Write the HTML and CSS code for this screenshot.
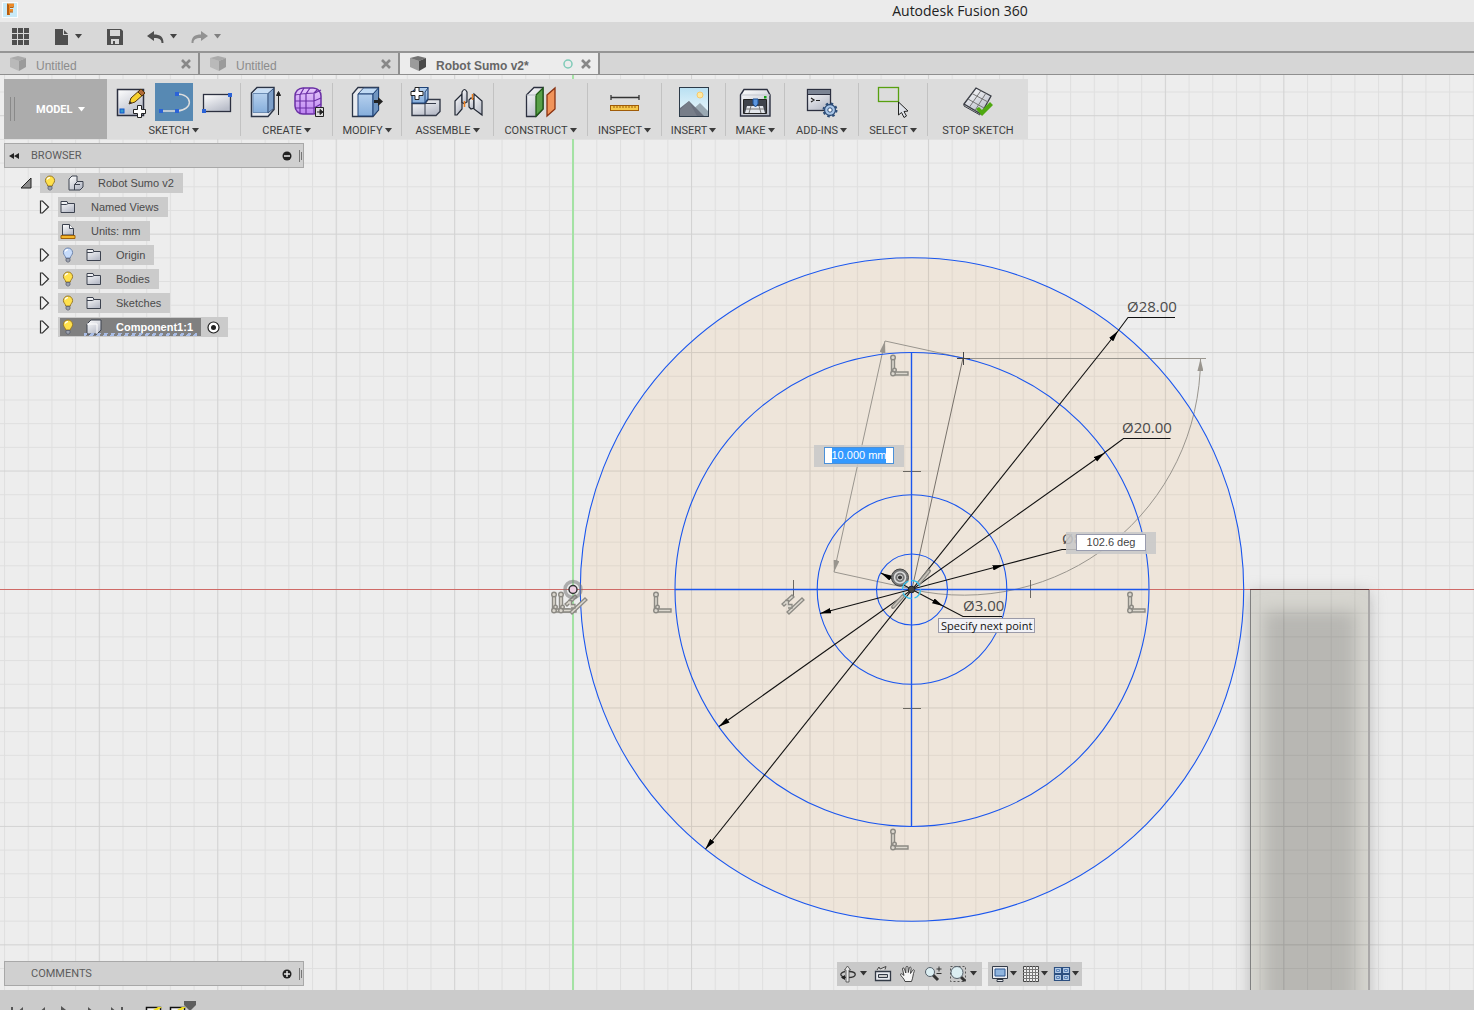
FILE: index.html
```html
<!DOCTYPE html>
<html lang="en">
<head>
<meta charset="utf-8">
<title>Autodesk Fusion 360</title>
<link rel="stylesheet" href="styles.css">
</head>
<body>
<svg class="defs" aria-hidden="true">
  <defs>
    <linearGradient id="g-steel" x1="0" y1="0" x2="0.6" y2="1"><stop offset="0" stop-color="#fff"/><stop offset="1" stop-color="#b9bdc9"/></linearGradient>
    <linearGradient id="g-blue" x1="0" y1="0" x2="0" y2="1"><stop offset="0" stop-color="#b5d0ee"/><stop offset="1" stop-color="#86aedb"/></linearGradient>
    <linearGradient id="g-sky" x1="0" y1="0" x2="0" y2="1"><stop offset="0" stop-color="#b9e0f2"/><stop offset="1" stop-color="#eef9fd"/></linearGradient>
    <linearGradient id="g-purple" x1="0" y1="0" x2="0" y2="1"><stop offset="0" stop-color="#e6c8fb"/><stop offset="1" stop-color="#bd84f2"/></linearGradient>
    <symbol id="i-cube" viewBox="0 0 18 18"><path d="M1 3 9 1l8 2-7 3z" fill="currentColor" opacity=".75"/><path d="M1 3l9 3v10l-9-4z" fill="currentColor" opacity=".5"/><path d="M10 6l7-3v9l-7 4z" fill="currentColor"/></symbol>
    <symbol id="i-close" viewBox="0 0 10 10"><path d="M1 1l8 8M9 1L1 9" stroke="currentColor" stroke-width="2.600"/></symbol>
    <symbol id="i-caret" viewBox="0 0 7 5"><path d="M0 0h7L3.500 4.500z" fill="currentColor"/></symbol>
    <symbol id="i-bulb" viewBox="0 0 12 16"><path d="M6 1a4.600 4.600 0 0 0-4.600 4.600C1.400 8 3.500 8.600 3.700 11h4.600c.2-2.400 2.300-3 2.300-5.400A4.600 4.600 0 0 0 6 1z" fill="var(--bulb)" stroke="var(--rim)"/><path d="M3 4.500Q4 2.500 6 2.600" stroke="#fff" stroke-width="1.300" fill="none"/><path d="M4 11.500h4v2.500L6.500 15h-1L4 14z" fill="#9aa0ad" stroke="#51586a" stroke-width=".7"/></symbol>
    <symbol id="i-folder" viewBox="0 0 16 14"><path d="M1 12.500v-11h6l1 2h6.500v9z" fill="url(#g-steel)" stroke="#3c424f"/><path d="M1 4.500h5.500l1.500-1" fill="none" stroke="#3c424f"/></symbol>
    <symbol id="i-arrow" viewBox="0 0 11 14"><path d="M1.500 1v12h2l6-6-6-6z" fill="#f2f2f2" stroke="#333" stroke-width="1.200"/></symbol>
    <symbol id="i-perp" viewBox="0 0 22 24"><g fill="#dcd8cf" stroke="#8c8a84" stroke-width="1.400"><path d="M3.500 4h3v13h-3zM5 18h15v3H5z"/><circle cx="5" cy="3.500" r="2.300"/><circle cx="5" cy="19.500" r="2.300"/><circle cx="6.500" cy="16" r="1.800"/></g></symbol>
    <symbol id="i-para" viewBox="0 0 26 22"><g fill="#dcd8cf" stroke="#8c8a84" stroke-width="1.300"><path d="M2 10 12 1l2 2L4 12zM7 18 22 4l2 2L9 20z"/><path d="M5 6.500h3.500v4H12V14H8"/></g></symbol>
    <marker id="m-black" viewBox="0 0 12 6" refX="12" refY="3" markerWidth="11" markerHeight="6" markerUnits="userSpaceOnUse" orient="auto-start-reverse"><path d="M0 0l12 3L0 6z" fill="#000"/></marker>
    <marker id="m-gray" viewBox="0 0 12 6" refX="12" refY="3" markerWidth="12" markerHeight="6" markerUnits="userSpaceOnUse" orient="auto-start-reverse"><path d="M0 0l12 3L0 6z" fill="#99958e"/></marker>
    <pattern id="p-minor" x="572.600" y="589" width="23.690" height="23.690" patternUnits="userSpaceOnUse"><path d="M0 .5H24M.5 0V24" stroke="#000" stroke-opacity=".06"/></pattern>
    <pattern id="p-major" x="572.600" y="589" width="118.450" height="118.450" patternUnits="userSpaceOnUse"><path d="M0 .5H119M.5 0V119" stroke="#000" stroke-opacity=".06"/></pattern>
    <filter id="f-blur" x="-50%" y="-20%" width="200%" height="140%"><feGaussianBlur stdDeviation="8"/></filter>
  </defs>
</svg>

<header class="titlebar">
  <svg class="logo" width="16" height="16" viewBox="0 0 16 16"><rect width="16" height="16" fill="#f8fcfe"/><rect x="1" y="1" width="14" height="14" fill="#c8eaf8"/><path d="M5 1.500h7v2.500l-1 .7H8V7h3v2.500L8 10v3H5z" fill="#f08a24"/><path d="M5 1.500l2 1.500v8.500l1 1.500H5zM8 4.700h3l1-.7v1l-1 1H8zM8 9.500h3v1H8z" fill="#b55d10"/></svg>
  <h1 class="title">Autodesk Fusion 360</h1>
</header>

<nav class="quickbar" aria-label="Quick access">
  <button class="qbtn" aria-label="Data panel"><svg width="17" height="17" viewBox="0 0 17 17" fill="#4f4f4f"><path d="M0 0h5v5H0zM6 0h5v5H6zM12 0h5v5h-5zM0 6h5v5H0zM6 6h5v5H6zM12 6h5v5h-5zM0 12h5v5H0zM6 12h5v5H6zM12 12h5v5h-5z"/></svg></button>
  <button class="qbtn q-file" aria-label="File"><svg width="14" height="16" viewBox="0 0 14 16" fill="#4f4f4f"><path d="M0 0h8v6h5v10H0zM9 1l4 4H9z"/></svg><svg class="caret" width="7" height="5"><use href="#i-caret"/></svg></button>
  <button class="qbtn q-save" aria-label="Save"><svg width="16" height="16" viewBox="0 0 16 16"><path d="M0 0h14l2 2v14H0z" fill="#4f4f4f"/><path d="M3 1h10v6H3zM4 10h8v5H4z" fill="#d8d8d8"/><path d="M6 12h2v3H6z" fill="#4f4f4f"/></svg></button>
  <button class="qbtn q-undo" aria-label="Undo"><svg width="17" height="12" viewBox="0 0 17 12"><path d="M0 5l7-5v3.500c6 0 9.500 2 9.500 8.500h-2c0-3.500-2-5-7.500-5v3z" fill="#4f4f4f"/></svg><svg class="caret" width="7" height="5"><use href="#i-caret"/></svg></button>
  <button class="qbtn q-redo" aria-label="Redo"><svg width="17" height="12" viewBox="0 0 17 12"><path d="M17 5l-7-5v3.500C4 3.500.5 5.500.5 12h2c0-3.500 2-5 7.500-5v3z" fill="#929292"/></svg><svg class="caret" width="7" height="5"><use href="#i-caret"/></svg></button>
</nav>

<div class="tabs">
  <div class="tab"><svg class="cube" width="18" height="18"><use href="#i-cube"/></svg><span class="tab-name">Untitled</span><button class="close" aria-label="Close"><svg width="10" height="10"><use href="#i-close"/></svg></button></div>
  <div class="tab"><svg class="cube" width="18" height="18"><use href="#i-cube"/></svg><span class="tab-name">Untitled</span><button class="close" aria-label="Close"><svg width="10" height="10"><use href="#i-close"/></svg></button></div>
  <div class="tab active"><svg class="cube" width="18" height="18"><use href="#i-cube"/></svg><span class="tab-name">Robot Sumo v2*</span><svg class="sync" width="10" height="10"><circle cx="5" cy="5" r="4" fill="none" stroke="#7fcbb8" stroke-width="1.500"/></svg><button class="close" aria-label="Close"><svg width="10" height="10"><use href="#i-close"/></svg></button></div>
</div>

<main class="workspace">
  <svg class="sketch" aria-label="Sketch canvas">
    <g transform="translate(0 -75)">
      <rect x="1249" y="592" width="121" height="480" fill="#8f8f8f" opacity=".5" filter="url(#f-blur)"/>
      <circle cx="912" cy="589.500" r="331.700" fill="#eee5da"/>
      <rect x="1250.500" y="589.500" width="118" height="500" fill="#d6d5cf"/>
      <rect x="1264" y="611" width="92" height="500" fill="#b8b7b3" filter="url(#f-blur)"/>
      <rect x="0" y="75" width="100%" height="100%" fill="url(#p-minor)"/>
      <rect x="0" y="75" width="100%" height="100%" fill="url(#p-major)"/>
      <path d="M573 75V2000" stroke="#a4e2a4" stroke-width="2"/>
      <path d="M0 589.500H5000" stroke="#cf6a66"/>
      <path d="M1250 589.500h119" stroke="#6b3030"/>
      <path d="M1250.500 590v1000" stroke="#808080"/><path d="M1369 590v1000" stroke="#aaa8a8" stroke-width="2"/>

      <g fill="none" stroke="#99958e">
        <path d="M963 358.500H1206M885 341l78 17M834 572l78 17"/>
        <path d="M885 341 834 572" marker-start="url(#m-gray)" marker-end="url(#m-gray)"/>
        <path d="M912 589.500A237 237 0 0 0 1200.500 359" marker-end="url(#m-gray)"/>
      </g>
      <path d="M963 358 912 589" stroke="#77716a"/>
      <path d="M785 589.500h17M793.500 580v18M903 471.500h18M911.500 462v18M1022 589.500h17M1030.500 580v18M903 708.500h18M911.500 699v18" stroke="#55524c" stroke-opacity=".85"/>
      <g fill="none" stroke="#1a56ee" stroke-width="1.100">
        <circle cx="912" cy="589.500" r="331.700"/><circle cx="912" cy="589.500" r="237"/><circle cx="912" cy="589.500" r="94.800"/><circle cx="912" cy="589.500" r="35.500"/>
        <path d="M675 589.500H1148.500M911.500 352.500V826.500" stroke-width="1.400"/>
      </g>
      <path d="M957 358.500h13M963.500 352v13" stroke="#444"/>

      <g fill="none" stroke="#111" stroke-width="1.100">
        <path d="M705.500 849 1118 331" marker-start="url(#m-black)" marker-end="url(#m-black)"/>
        <path d="M1118 331l10-13.500h47"/>
        <path d="M719 726.500 1104.500 453" marker-start="url(#m-black)" marker-end="url(#m-black)"/>
        <path d="M1104 453l19.500-14.500h47"/>
        <path d="M820 613.500 1003.500 565" marker-start="url(#m-black)" marker-end="url(#m-black)"/>
        <path d="M1003 565l59-15.500h47"/>
        <path d="M881 573 912 589.500"  marker-start="url(#m-black)"/>
        <path d="M912 589.500 943 606" marker-end="url(#m-black)"/>
        <path d="M943 606l20 10.500h39"/>
      </g>
      <g class="dim">
        <text x="1127" y="312">Ø28.00</text>
        <text x="1122" y="433">Ø20.00</text>
        <text x="1062" y="544">Ø8.00</text>
        <text x="963" y="611">Ø3.00</text>
      </g>

      <use href="#i-perp" x="888" y="354" width="22" height="24"/>
      <use href="#i-perp" x="888" y="828" width="22" height="24"/>
      <use href="#i-perp" x="651" y="591" width="22" height="24"/>
      <use href="#i-perp" x="1125" y="591" width="22" height="24"/>
      <use href="#i-perp" x="549" y="591" width="22" height="24"/>
      <use href="#i-perp" x="556" y="591" width="22" height="24"/>
      <use href="#i-para" x="563" y="594" width="26" height="22"/>
      <use href="#i-para" x="780" y="594" width="26" height="22"/>
      <path d="M893 607l10-11M919 583l10-12" stroke="#8c8a84" stroke-width="4" stroke-linecap="round"/><path d="M893 607l10-11M919 583l10-12" stroke="#c9c4bb" stroke-width="1.500"/>
      <circle cx="573" cy="589.500" r="8" fill="none" stroke="#777" stroke-opacity=".55" stroke-width="3.500"/><circle cx="573" cy="589.500" r="4" fill="#efcfe3" stroke="#333" stroke-width="1.500"/>
      <circle cx="900" cy="577.500" r="8.500" fill="#777" stroke="#444"/><circle cx="900" cy="577.500" r="5.500" fill="none" stroke="#ddd" stroke-width="1.500"/><circle cx="900" cy="577.500" r="2.500" fill="#333" stroke="#ddd"/>
      <circle cx="911.500" cy="589.500" r="9" fill="none" stroke="#35c2ee" stroke-width="1.300" stroke-dasharray="11 3"/><circle cx="911.500" cy="589.500" r="3.300" fill="#444" stroke="#222"/>
    </g>
  </svg>

  <div class="ribbon">
    <button class="mode"><svg class="grip" width="5" height="24"><path d="M.5 0v24M4.500 0v24" stroke="#8a8a8a"/></svg><span>MODEL</span><svg class="caret" width="7" height="5"><use href="#i-caret"/></svg></button>

    <section class="group">
      <div class="tools">
        <button class="tool" aria-label="Create sketch"><svg width="38" height="38"><rect x="5.500" y="6.500" width="26" height="26" fill="url(#g-steel)" stroke="#2c3040" stroke-width="1.500"/><rect x="8" y="26" width="4" height="4" fill="#39c" stroke="#15c"/><path d="M17 21l2-6L29 6l4 4-10 9z" fill="#f7d12e" stroke="#54350b"/><path d="M26 9l3-3 4 4-3 3z" fill="#b06b38" stroke="#54350b"/><path d="M17 21l1-3 2 2z" fill="#333"/><path d="M25.500 22.500h4v4h4v4h-4v4h-4v-4h-4v-4h4z" fill="#fff" stroke="#222"/></svg></button>
        <button class="tool selected" aria-label="Line"><svg width="38" height="38"><path d="M6 28H22C39 27 38 11 22 11" fill="none" stroke="#dedede" stroke-width="1.500"/><path d="M4 26h4v4H4zM20 26h4v4h-4zM20 9h4v4h-4z" fill="#2b63d8"/></svg></button>
        <button class="tool" aria-label="Rectangle"><svg width="38" height="38"><rect x="5.500" y="11.500" width="27" height="17" fill="url(#g-steel)" stroke="#2c3040" stroke-width="1.300"/><path d="M4 26h4v4H4zM30 10h4v4h-4z" fill="#2b63d8"/></svg></button>
      </div>
      <button class="label">SKETCH<svg class="caret" width="7" height="5"><use href="#i-caret"/></svg></button>
    </section>

    <section class="group">
      <div class="tools">
        <button class="tool" aria-label="Extrude"><svg width="38" height="38"><path d="M5.500 10 11 4.500h17v22l-6 7H5.500z" fill="#e4e8ef" stroke="#2c3547" stroke-width="1.500"/><path d="M7 10.500h15v19H7z" fill="url(#g-blue)" stroke="#6c8db5"/><path d="M7 10l5-4.500h15L22 10z" fill="#c8def5"/><path d="M22 10.500l5.500-5v20L22 30z" fill="#7d9fc8" stroke="#34517a"/><path d="M32.500 32V10M30.500 12.500l2-4 2 4z" stroke="#222" fill="#222"/></svg></button>
        <button class="tool" aria-label="Create form"><svg width="38" height="38"><rect x="6" y="5" width="26" height="26" rx="8" fill="url(#g-purple)" stroke="#6a2fa5" stroke-width="1.500"/><path d="M6 12q12-2 20-2l6-3M6 18h19l7-3M6 25h19l7-4M11 31V12l4-7M17 31V11l4-6M25 30V10l4-4" fill="none" stroke="#6a2fa5" stroke-width="1.200"/><path d="M26.500 24.500h8v9h-8z" fill="#ddd" stroke="#222"/><path d="M28 29h3v-2.500l3 2.500-3 2.500V29" fill="#222" stroke="#222"/></svg></button>
      </div>
      <button class="label">CREATE<svg class="caret" width="7" height="5"><use href="#i-caret"/></svg></button>
    </section>

    <section class="group">
      <div class="tools">
        <button class="tool" aria-label="Press pull"><svg width="38" height="38"><path d="M4.500 11 10 4.500h20.500V27L25 33.500H4.500z" fill="#e8ebf0" stroke="#2c3547" stroke-width="1.300"/><path d="M10 11l5.500-6h15L25 11z" fill="#c0daf4" stroke="#34517a"/><path d="M10 11h15v22H10z" fill="url(#g-blue)" stroke="#1f4378"/><path d="M25 11l5.500-6v22L25 33z" fill="#6f94bf" stroke="#1f4378"/><path d="M26 17h4v-3l5 4.500-5 4.500v-3h-4z" fill="#222"/></svg></button>
      </div>
      <button class="label">MODIFY<svg class="caret" width="7" height="5"><use href="#i-caret"/></svg></button>
    </section>

    <section class="group">
      <div class="tools">
        <button class="tool" aria-label="New component"><svg width="38" height="38"><path d="M5 20.500h13l3-4h12v12l-4 4H5z" fill="url(#g-steel)" stroke="#343a48" stroke-width="1.400"/><path d="M18 33V20.500M18 20.500h11" fill="none" stroke="#343a48"/><path d="M5 9l5-4.500h11v11L18 20H5z" fill="url(#g-blue)" stroke="#1f4378" stroke-width="1.200"/><path d="M18 20V9l3-4" fill="none" stroke="#1f4378"/><path d="M8 4.500h4v4h4v4h-4v4H8v-4H4v-4h4z" fill="#fff" stroke="#222"/></svg></button>
        <button class="tool" aria-label="Joint"><svg width="38" height="38"><g fill="url(#g-steel)" stroke="#222834" stroke-width="1.200"><path d="M5 18l7-7v15l-5 6H5z"/><path d="M12 9q2.500-5 5 0v10l-3 1.500-2-1z"/><path d="M19 17l2-2 3 1v9l-3 1-2-2z"/><path d="M24 11l8 7v14l-8-6z"/></g><path d="M14.500 18v6M22.500 11v6" stroke="#f08020" stroke-width="1.500"/></svg></button>
      </div>
      <button class="label">ASSEMBLE<svg class="caret" width="7" height="5"><use href="#i-caret"/></svg></button>
    </section>

    <section class="group">
      <div class="tools">
        <button class="tool" aria-label="Offset plane"><svg width="38" height="38"><path d="M4.500 12 12 4.500h9V26l-7 7.500H4.500z" fill="url(#g-steel)" stroke="#2c3040" stroke-width="1.300"/><path d="M14 12l7-7v21l-7 7z" fill="#58a048" stroke="#1f5a15" stroke-width="1.300"/><path d="M4.500 12H14" stroke="#b4b8c0"/><path d="M25 12l8-7v21l-8 7z" fill="#f1945a" stroke="#8a3210" stroke-width="1.300"/></svg></button>
      </div>
      <button class="label">CONSTRUCT<svg class="caret" width="7" height="5"><use href="#i-caret"/></svg></button>
    </section>

    <section class="group">
      <div class="tools">
        <button class="tool" aria-label="Measure"><svg width="38" height="38"><path d="M5 14.500h28M5 12v5M33 12v5" stroke="#333" stroke-width="1.300"/><rect x="4.500" y="22.500" width="28" height="5" fill="#f5c84b" stroke="#a05c08"/><path d="M8 23v2M11 23v2M14 23v2M17 23v2M20 23v2M23 23v2M26 23v2M29 23v2" stroke="#a05c08"/></svg></button>
      </div>
      <button class="label">INSPECT<svg class="caret" width="7" height="5"><use href="#i-caret"/></svg></button>
    </section>

    <section class="group">
      <div class="tools">
        <button class="tool" aria-label="Insert image"><svg width="38" height="38"><rect x="4.500" y="4.500" width="29" height="29" fill="url(#g-sky)" stroke="#2c3a48"/><circle cx="25" cy="12" r="3" fill="#ffe9a0" stroke="#f9c96a"/><path d="M16 28l9-8 8 8v5H16z" fill="#9aa9b3"/><path d="M5 25l9-7 15 15H5z" fill="#6a707d"/><path d="M5 27l9-9 3 6 5 9H5z" fill="#80858f" opacity=".6"/></svg></button>
      </div>
      <button class="label">INSERT<svg class="caret" width="7" height="5"><use href="#i-caret"/></svg></button>
    </section>

    <section class="group">
      <div class="tools">
        <button class="tool" aria-label="3D print"><svg width="38" height="38"><path d="M4.500 12 8 6.500h23l3 5.500v21H4.500z" fill="url(#g-steel)" stroke="#2c3040" stroke-width="1.400"/><path d="M5 12h29" stroke="#c3c6ce"/><path d="M7.500 16.500h23v14h-23z" fill="#3f434c" stroke="#222"/><path d="M11 23h16l2 7H9z" fill="#e3e6ec"/><path d="M10 26h18M15 23l-2 7M23 23l2 7" stroke="#777"/><path d="M17 16h5v5l-2.500 3L17 21z" fill="#5b96e0" stroke="#1b4f94"/><path d="M28 13h2.500v2.500H28z" fill="#14a014"/></svg></button>
      </div>
      <button class="label">MAKE<svg class="caret" width="7" height="5"><use href="#i-caret"/></svg></button>
    </section>

    <section class="group">
      <div class="tools">
        <button class="tool" aria-label="Scripts and add-ins"><svg width="38" height="38"><rect x="4.500" y="6.500" width="23" height="21" fill="url(#g-steel)" stroke="#2c3040" stroke-width="1.300"/><path d="M5 7h22v4H5z" fill="#7b8494"/><path d="M5 11.500h22" stroke="#2c3040"/><path d="M8 15l3 2-3 2M13 17.500h4" fill="none" stroke="#222" stroke-width="1.200"/><circle cx="27" cy="27" r="5.500" fill="#a9c6e8" stroke="#2d4d78" stroke-width="1.300"/><circle cx="27" cy="27" r="6.500" fill="none" stroke="#2d4d78" stroke-width="2" stroke-dasharray="2.500 2.600"/><circle cx="27" cy="27" r="2.200" fill="#fff" stroke="#2d4d78"/></svg></button>
      </div>
      <button class="label">ADD-INS<svg class="caret" width="7" height="5"><use href="#i-caret"/></svg></button>
    </section>

    <section class="group">
      <div class="tools">
        <button class="tool" aria-label="Select"><svg width="38" height="38"><rect x="4.500" y="4.500" width="20" height="14" fill="none" stroke="#58a010" stroke-width="1.300"/><path d="M24.500 19v13l3-2.500 2.500 5 2.500-1.500-2.500-4.500 4-.5z" fill="#dfe2e8" stroke="#222"/></svg></button>
      </div>
      <button class="label">SELECT<svg class="caret" width="7" height="5"><use href="#i-caret"/></svg></button>
    </section>

    <section class="group last">
      <div class="tools">
        <button class="tool" aria-label="Stop sketch"><svg width="38" height="38"><path d="M5 21 17 5l15 8-10 18z" fill="url(#g-steel)" stroke="#3a3d45" stroke-width="1.300"/><path d="M5 21v2l16 9" fill="none" stroke="#3a3d45"/><path d="M9 16l16 9M13 10.500l16 8.500M10.500 24 22 7.500M16 27.500 27 10" stroke="#777" fill="none"/><path d="M17 26l3-2 3 3 8-8 3 3-11 11z" fill="#4fa811"/></svg></button>
      </div>
      <button class="label">STOP SKETCH</button>
    </section>
  </div>

  <aside class="browser">
    <div class="panel-head"><svg class="rewind" width="10" height="6" viewBox="0 0 10 6"><path d="M5 0v6L0 3zM10 0v6L5 3z" fill="#222"/></svg><h2 class="panel-title">BROWSER</h2><button class="round" aria-label="Collapse"><svg width="10" height="10"><circle cx="5" cy="5" r="4.500" fill="#222"/><path d="M2 5h6" stroke="#e8e8e8" stroke-width="1.500"/></svg></button><svg width="3" height="12"><path d="M.5 0v12M2.500 2v8" stroke="#777"/></svg></div>
    <ul class="tree">
      <li class="row root"><svg width="12" height="12" viewBox="0 0 12 12"><path d="M11 1v10H1z" fill="#8b8b8b" stroke="#222"/></svg><span class="chip"><svg class="bulb" width="12" height="16"><use href="#i-bulb"/></svg><svg width="16" height="16" viewBox="0 0 16 16"><path d="M1 14.500V4l3-3h5v5.500h6V12l-3 3H1z" fill="url(#g-steel)" stroke="#3c424f"/><path d="M6.500 15V9.500H12" fill="none" stroke="#3c424f"/><path d="M6.500 9.500L9 7" stroke="#3c424f"/></svg><span class="name">Robot Sumo v2</span></span></li>
      <li class="row"><svg width="11" height="14"><use href="#i-arrow"/></svg><span class="chip plain"><svg width="16" height="14"><use href="#i-folder"/></svg><span class="name">Named Views</span></span></li>
      <li class="row leaf"><span class="chip plain"><svg width="16" height="16" viewBox="0 0 16 16"><path d="M2.500 12V1.500h7l4 4V12z" fill="url(#g-steel)" stroke="#3c424f"/><path d="M9.500 1.500v4h4" fill="#fff" stroke="#3c424f"/><path d="M1 12.500h14v3H1z" fill="#f5b72b" stroke="#a06208"/></svg><span class="name">Units: mm</span></span></li>
      <li class="row"><svg width="11" height="14"><use href="#i-arrow"/></svg><span class="chip"><svg class="bulb off" width="12" height="16"><use href="#i-bulb"/></svg><svg width="16" height="14"><use href="#i-folder"/></svg><span class="name">Origin</span></span></li>
      <li class="row"><svg width="11" height="14"><use href="#i-arrow"/></svg><span class="chip"><svg class="bulb" width="12" height="16"><use href="#i-bulb"/></svg><svg width="16" height="14"><use href="#i-folder"/></svg><span class="name">Bodies</span></span></li>
      <li class="row"><svg width="11" height="14"><use href="#i-arrow"/></svg><span class="chip"><svg class="bulb" width="12" height="16"><use href="#i-bulb"/></svg><svg width="16" height="14"><use href="#i-folder"/></svg><span class="name">Sketches</span></span></li>
      <li class="row current"><svg width="11" height="14"><use href="#i-arrow"/></svg><span class="chip"><svg class="bulb" width="12" height="16"><use href="#i-bulb"/></svg><svg width="16" height="16" viewBox="0 0 16 16"><path d="M1 15V5l4-4h10v10l-4 4z" fill="url(#g-steel)" stroke="#3c424f"/><path d="M1 5h10v10" fill="none" stroke="#fff"/></svg><span class="name">Component1:1</span></span><span class="activate"><svg width="13" height="13"><circle cx="6.500" cy="6.500" r="5.500" fill="#fff" stroke="#222" stroke-width="1.200"/><circle cx="6.500" cy="6.500" r="2.500" fill="#222"/></svg></span></li>
    </ul>
  </aside>

  <div class="entry length"><input class="field" aria-label="Length" value="10.000 mm"></div>
  <div class="entry angle"><input class="field" aria-label="Angle" value="102.6 deg"></div>
  <div class="hint">Specify next point</div>

  <div class="dock">
    <div class="panel-head comments"><h2 class="panel-title">COMMENTS</h2><button class="round" aria-label="Expand"><svg width="10" height="10"><circle cx="5" cy="5" r="4.500" fill="#222"/><path d="M2 5h6M5 2v6" stroke="#e8e8e8" stroke-width="1.500"/></svg></button><svg width="3" height="12"><path d="M.5 0v12M2.500 2v8" stroke="#777"/></svg></div>
    <div class="navbar">
      <button class="nav" aria-label="Orbit"><svg width="18" height="18" viewBox="0 0 18 18"><path d="M6 6.500C0 8 0 12 9 12.500c10 0 9-6 1-6M6 12.500H3" fill="none" stroke="#333" stroke-width="1.300"/><path d="M7 17V5H5.500L8.500 1l3 4H10v12z" fill="#e8e8e8" stroke="#444" stroke-width=".8"/><path d="M6 10v5l-4-2.500z" fill="#222"/></svg><svg class="caret" width="7" height="5"><use href="#i-caret"/></svg></button>
      <button class="nav" aria-label="Look at"><svg width="18" height="18" viewBox="0 0 18 18"><path d="M1.500 6.500h15v9h-15z" fill="#e8eaef" stroke="#333a46" stroke-width="1.300"/><path d="M4.500 9.500h9v3h-9z" fill="#ccc" stroke="#333a46"/><path d="M3 5l2-3 1 2 6-2.500-1 3" fill="#ddd" stroke="#444"/></svg></button>
      <button class="nav" aria-label="Pan"><svg width="18" height="18" viewBox="0 0 18 18"><path d="M6 16.500C5 13 1.500 11 1.500 9.500s2-.5 3.500 1L3.500 4c0-1.500 1.500-1.500 2 0l1.300 4L7 2.500c0-1.500 2-1.500 2 0l.3 5 1-4.500c.5-1.500 2-1 1.800.5l-.6 5 2-3c1-1.500 2.300-.5 1.700.8C14 9 14 13 12.500 16.500z" fill="#f6f6f6" stroke="#333" stroke-width=".9"/></svg></button>
      <button class="nav" aria-label="Zoom"><svg width="18" height="18" viewBox="0 0 18 18"><path d="M9 10l5 5" stroke="#333" stroke-width="3"/><circle cx="6" cy="7" r="4.500" fill="#dceef2" stroke="#55606a"/><path d="M12.500 4h5M15 1.500v5M12.500 8.500h5" stroke="#333"/></svg></button>
      <button class="nav" aria-label="Zoom window"><svg width="18" height="18" viewBox="0 0 18 18"><rect x="1.500" y="1.500" width="15" height="15" fill="none" stroke="#555" stroke-dasharray="2 2"/><path d="M12 12l4 4" stroke="#333" stroke-width="3"/><circle cx="8" cy="7.500" r="6" fill="#dceef2" stroke="#55606a"/></svg><svg class="caret" width="7" height="5"><use href="#i-caret"/></svg></button>
    </div>
    <div class="navbar view">
      <button class="nav" aria-label="Display settings"><svg width="18" height="18" viewBox="0 0 18 18"><path d="M1.500 1.500h15v12h-15z" fill="#e8eaef" stroke="#333a46"/><path d="M4 4h10v7H4z" fill="#8fb4de" stroke="#2c5690"/><path d="M6 14.500h6v2H6z" fill="#e8eaef" stroke="#333a46"/></svg><svg class="caret" width="7" height="5"><use href="#i-caret"/></svg></button>
      <button class="nav" aria-label="Grid and snaps"><svg width="18" height="18" viewBox="0 0 18 18"><path d="M1.500 1.500h15v15h-15z" fill="#eee" stroke="#444"/><path d="M4.500 1v16M7.500 1v16M10.500 1v16M13.500 1v16M1 4.500h16M1 7.500h16M1 10.500h16M1 13.500h16" stroke="#777"/></svg><svg class="caret" width="7" height="5"><use href="#i-caret"/></svg></button>
      <button class="nav" aria-label="Viewports"><svg width="18" height="18" viewBox="0 0 18 18"><path d="M1.500 2.500h7v6h-7zM9.500 2.500h7v6h-7zM1.500 9.500h7v6h-7zM9.500 9.500h7v6h-7z" fill="#b6cde8" stroke="#2c4f80" stroke-width="1.200"/><path d="M3.500 4.500h3v2h-3zM11.500 4.500h3v2h-3zM3.500 11.500h3v2h-3zM11.500 11.500h3v2h-3z" fill="none" stroke="#5a82b8"/></svg><svg class="caret" width="7" height="5"><use href="#i-caret"/></svg></button>
    </div>
  </div>
</main>

<footer class="timeline">
  <svg width="200" height="20" aria-label="Timeline"><g fill="#555"><path d="M11 17h2v14h-2zM23 17v14l-8-7zM45 17v14l-8-7zM61 16v16l10-8zM88 17v14l8-7zM111 17v14l8-7zM121 17h2v14h-2z"/></g><path d="M146.500 17.500h14v10h-14zM170.500 17.500h14v10h-14z" fill="#f4f4f4" stroke="#111" stroke-width="1.500"/><path d="M153 20l5-3h4l-4 3zM177 20l5-3h4l-4 3z" fill="#f2df1f"/><path d="M184 11h12v4l-6 6-6-6z" fill="#5e5e5e"/></svg>
</footer>
</body>
</html>
```
FILE: styles.css
```css
* { box-sizing: border-box; }
body { margin: 0; height: 100vh; display: flex; flex-direction: column; overflow: hidden; background: #ececec; color: #444; font: 11px/14px "Liberation Sans", Arial, sans-serif; }
button { border: 0; padding: 0; margin: 0; background: none; font: inherit; color: inherit; }
svg { display: block; flex: none; }
h1, h2 { margin: 0; font-weight: 400; }
.defs { position: absolute; width: 0; height: 0; }

.titlebar { flex: none; height: 22px; display: flex; align-items: center; padding: 0 2px; background: #ebebeb; }
.logo { margin-bottom: 2px; }
.title { flex: 1; padding-left: 430px; text-align: center; font: 14px/22px "Open Sans", sans-serif; color: #222; }

.quickbar { flex: none; height: 31px; display: flex; align-items: center; padding: 0 12px; background: #d8d8d8; border-bottom: 2px solid #959595; }
.qbtn { display: flex; align-items: center; gap: 6px; color: #444; }
.q-file { margin-left: 26px; }
.q-save { margin-left: 25px; }
.q-undo { margin-left: 24px; }
.q-redo { margin-left: 14px; color: #808080; }

.tabs { flex: none; height: 22px; display: flex; background: #d6d6d6; border-bottom: 1px solid #8f8f8f; }
.tab { width: 200px; display: flex; align-items: center; padding: 0 7px 0 9px; border-right: 2px solid #8f8f8f; color: #8c8c8c; font-size: 12px; }
.tab.active { background: #ececec; font-weight: 700; color: #666; }
.tab-name { flex: 1; padding: 4px 0 0 9px; }
.tab .cube { color: #9b9b9b; }
.tab.active .cube { color: #4a4a4a; }
.sync { margin-right: 8px; }
.close { color: #888; }

.workspace { flex: 1; min-height: 0; position: relative; display: flex; flex-direction: column; padding: 4px; background: #ededed; }
.sketch { position: absolute; inset: 0; width: 100%; height: 100%; }
.dim { font: 15px "Open Sans", sans-serif; fill: #4a4a4a; }

.ribbon { position: relative; align-self: flex-start; display: grid; grid-template-columns: 103px 134px 92px 69px 92px 94px 74px 64px 59px 74px 69px 100px; height: 60px; background: #dcdcdc; font-family: Roboto, sans-serif; }
.mode { display: flex; align-items: center; background: #acacac; color: #fff; font-weight: 700; }
.mode span { padding: 2px 5px 0 21px; }
.grip { margin-left: 6px; }
.group { display: flex; flex-direction: column; align-items: center; justify-content: space-between; margin: 4px 0 3px; border-right: 1px solid #c2c2c2; }
.group.last { border-right: 0; }
.tools { display: flex; gap: 5px; }
.tool { width: 38px; height: 38px; }
.tool.selected { background: #5789b3; }
.label { display: flex; align-items: center; gap: 2px; line-height: 11px; color: #3c3c3c; }

.browser { position: relative; width: 300px; margin-top: 4px; }
.panel-head { display: flex; align-items: center; gap: 7px; width: 300px; height: 25px; padding: 0 1px 0 4px; background: #d0d0d0; border: 1px solid #a8a8a8; font-family: Roboto, sans-serif; color: #5c5c5c; }
.panel-title { flex: 1; padding-left: 5px; font-size: 11px; line-height: 14px; }
.comments .panel-title { padding-left: 22px; }
.tree { list-style: none; margin: 5px 0 0; padding: 0; display: flex; flex-direction: column; gap: 4px; }
.row { display: flex; align-items: center; height: 20px; padding-left: 35px; gap: 8px; }
.row.root { padding-left: 16px; }
.row.leaf { padding-left: 54px; }
.chip { display: flex; align-items: center; gap: 12px; height: 20px; padding: 0 9px 0 4px; background: #cbcbcb; }
.chip.plain { gap: 14px; padding-left: 2px; }
.bulb { --bulb: #ffe14d; --rim: #9a7a28; }
.bulb.off { --bulb: #c7dcfb; --rim: #6f86ad; }
.name { padding-left: 2px; color: #4a4a4a; }
.chip.plain .name { padding-left: 1px; }
.current .chip { position: relative; padding: 0 8px 0 2px; background: #808080; border: 0 solid #cbcbcb; border-width: 1px 0 1px 2px; }
.current .chip::after { content: ""; position: absolute; left: 24px; right: 4px; bottom: 0; height: 3px; background: repeating-linear-gradient(120deg, #a9bde6 0 3px, transparent 3px 6px); }
.current .name { font-weight: 700; color: #fff; }
.activate { display: flex; align-items: center; height: 20px; margin-left: -8px; padding: 0 8px 0 6px; background: #cbcbcb; }

.entry { position: absolute; width: 90px; height: 22px; padding: 2px 10px; background: rgba(200, 200, 200, .88); }
.length { left: 814px; top: 370px; }
.angle { left: 1066px; top: 457px; }
.field { display: block; width: 70px; height: 17px; padding: 0 0 2px; border: 1px solid #999cae; background: #fff; text-align: center; font: inherit; color: #444; }
.length .field { border-color: #4a90d9; color: #fff; background: linear-gradient(#3399ff, #3399ff) center / 54px 15px no-repeat #fff; }
.hint { position: absolute; left: 938px; top: 543px; height: 15px; padding: 0 2px; border: 1px solid #9a9aa8; background: #f2f2f6; color: #111; font: 11px/13px "Open Sans", sans-serif; }

.dock { position: relative; display: flex; align-items: center; margin-top: auto; }
.navbar { display: flex; align-items: center; gap: 7px; height: 24px; width: 145px; margin-left: 533px; padding-left: 2px; background: #c9c9c9; }
.navbar.view { width: 94px; margin-left: 6px; gap: 5px; padding-left: 3px; }
.nav { display: flex; align-items: center; gap: 3px; color: #333; }
.view .nav { gap: 1px; }

.timeline { flex: none; height: 20px; overflow: hidden; background: #cbcbcb; }
```
